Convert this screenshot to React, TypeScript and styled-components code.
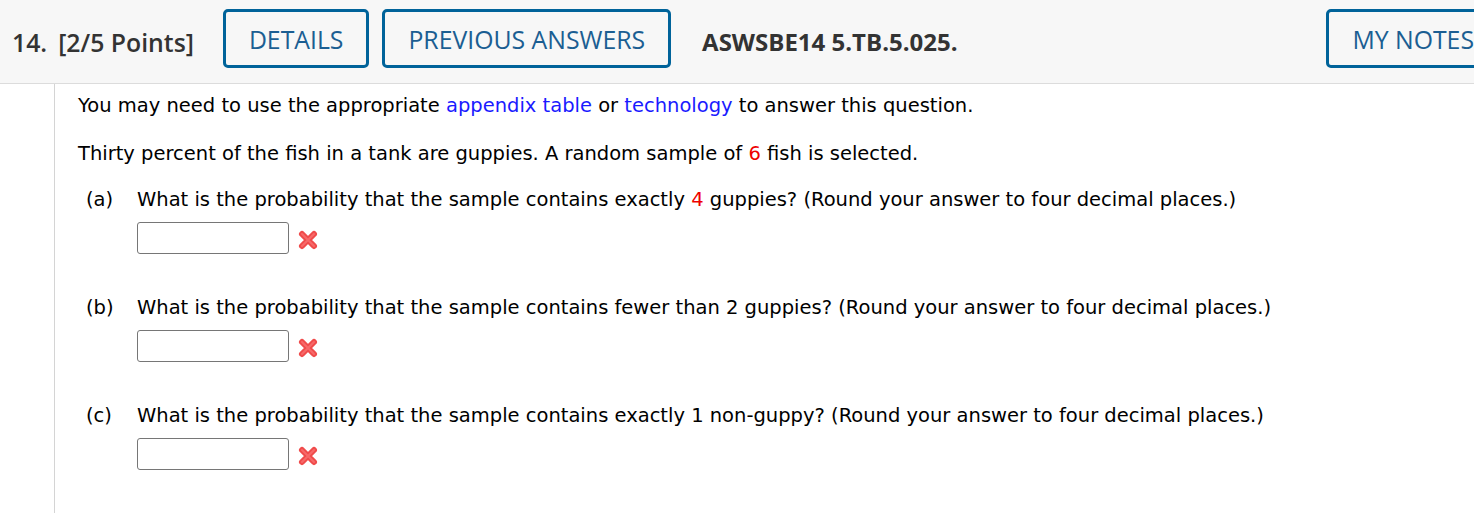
import React from "react";
import styled, { createGlobalStyle } from "styled-components";

const Global = createGlobalStyle`
  html, body { margin: 0; padding: 0; background: #fff; }
  body { width: 1474px; height: 513px; overflow: hidden; }
`;

const Page = styled.div`
  display: flex;
  flex-direction: column;
  height: 513px;
`;

const Header = styled.header`
  display: flex;
  align-items: center;
  flex-shrink: 0;
  height: 83px;
  background: #f7f7f7;
  border-bottom: 1px solid #dcdcdc;
  padding-left: 12px;
  font-family: "Open Sans", sans-serif;
  white-space: nowrap;
  overflow: hidden;
`;

const Number = styled.span`
  font-size: 24.8px;
  font-weight: 600;
  color: #333;
  margin-right: 11px;
`;

const Points = styled.span`
  font-size: 24.8px;
  font-weight: 600;
  color: #333;
  margin-right: 29px;
`;

const HeadButton = styled.button<{ $ml?: number; $mr?: number }>`
  height: 59px;
  margin-top: -6px;
  margin-left: ${(p) => p.$ml ?? 0}px;
  margin-right: ${(p) => p.$mr ?? 0}px;
  padding: 0 23px;
  border: 3px solid #00639a;
  border-radius: 5px;
  background: transparent;
  color: #1b5e92;
  font-family: "Open Sans", sans-serif;
  font-size: 24.8px;
  font-weight: 400;
  flex-shrink: 0;
`;

const Code = styled.span`
  font-size: 24px;
  font-weight: 700;
  color: #333;
  margin-left: 31px;
  margin-right: auto;
`;

const Body = styled.div`
  flex: 1;
  min-height: 0;
  margin-left: 54px;
  border-left: 1px solid #d4d4d4;
  padding: 10px 0 0 23px;
  font-family: "DejaVu Sans", Verdana, sans-serif;
  font-size: 19.5px;
  color: #000;
`;

const Para = styled.p<{ $mb: number }>`
  margin: 0 0 ${(p) => p.$mb}px;
  line-height: 24px;
`;

const Link = styled.span`
  color: #1a1aff;
`;
const Red = styled.span`
  color: #e00;
`;

const Part = styled.div`
  display: grid;
  grid-template-columns: 59px 1fr;
  margin-bottom: 42px;
`;

const Label = styled.span`
  padding-left: 8px;
  line-height: 24px;
`;

const Question = styled.div`
  line-height: 24px;
`;

const AnswerRow = styled.div`
  display: flex;
  align-items: center;
  gap: 8px;
  margin-top: 10px;
`;

const Input = styled.div`
  width: 150px;
  height: 30px;
  border: 1px solid #767676;
  border-radius: 3px;
  background: #fff;
`;

const CrossIcon = styled.svg`
  margin-top: 4px;
`;

const Cross = () => (
  <CrossIcon width="22" height="22" viewBox="0 0 22 22">
    <path d="M5 5 L17 17 M17 5 L5 17" stroke="#f04b4b" strokeWidth="6" strokeLinecap="round" />
    <path d="M5 5 L17 17 M17 5 L5 17" stroke="#f88" strokeWidth="2" strokeLinecap="round" opacity="0.5" />
  </CrossIcon>
);

const parts = [
  { label: "(a)", q: <>What is the probability that the sample contains exactly <Red>4</Red> guppies? (Round your answer to four decimal places.)</> },
  { label: "(b)", q: <>What is the probability that the sample contains fewer than 2 guppies? (Round your answer to four decimal places.)</> },
  { label: "(c)", q: <>What is the probability that the sample contains exactly 1 non-guppy? (Round your answer to four decimal places.)</> },
];

export default function App() {
  return (
    <>
      <Global />
      <Page>
        <Header>
          <Number>14.</Number>
          <Points>[2/5 Points]</Points>
          <HeadButton>DETAILS</HeadButton>
          <HeadButton $ml={13}>PREVIOUS ANSWERS</HeadButton>
          <Code>ASWSBE14 5.TB.5.025.</Code>
          <HeadButton $mr={-26}>MY NOTES</HeadButton>
        </Header>
        <Body>
          <Para $mb={24}>
            You may need to use the appropriate <Link>appendix table</Link> or <Link>technology</Link> to answer this question.
          </Para>
          <Para $mb={22}>
            Thirty percent of the fish in a tank are guppies. A random sample of <Red>6</Red> fish is selected.
          </Para>
          {parts.map((p) => (
            <Part key={p.label}>
              <Label>{p.label}</Label>
              <div>
                <Question>{p.q}</Question>
                <AnswerRow>
                  <Input />
                  <Cross />
                </AnswerRow>
              </div>
            </Part>
          ))}
        </Body>
      </Page>
    </>
  );
}
